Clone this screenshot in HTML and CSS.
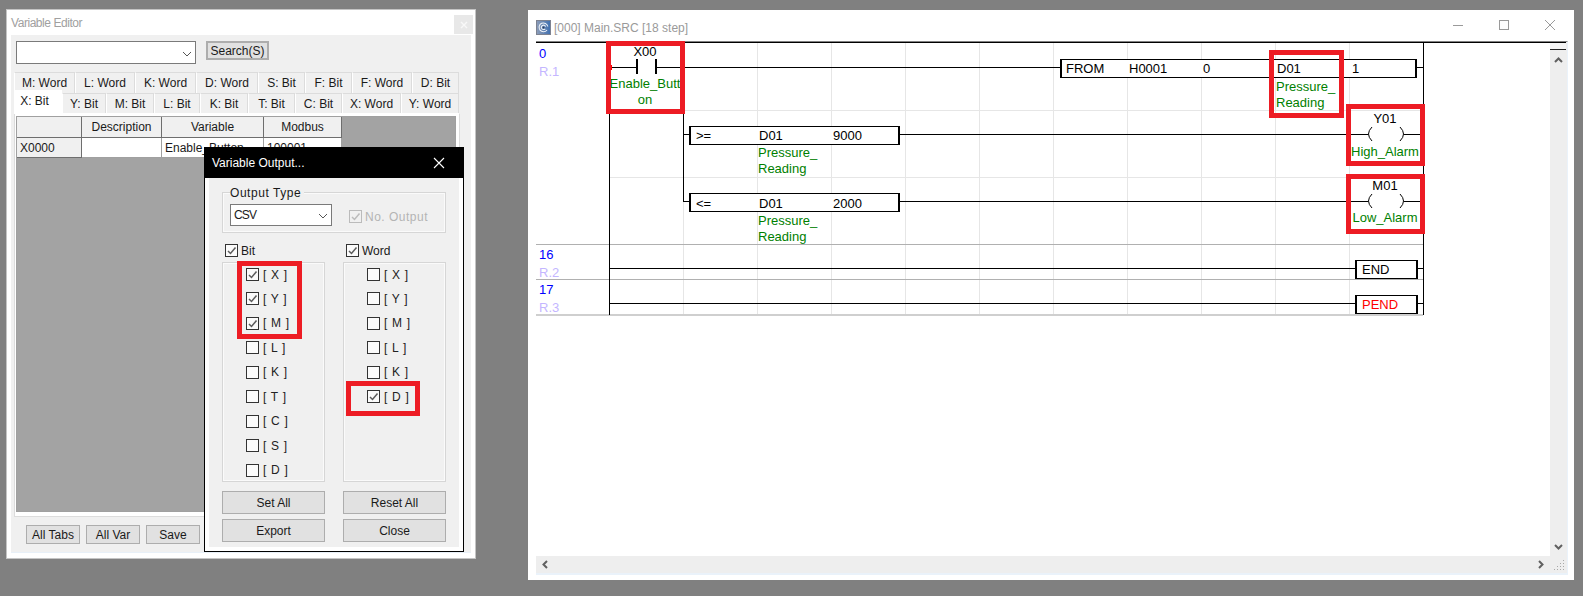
FILE: index.html
```html
<!DOCTYPE html>
<html lang="en">
<head>
<meta charset="utf-8">
<title>Variable Editor and Ladder</title>
<link rel="stylesheet" href="styles.css">
</head>
<body>
<section class="win editor">
  <header class="editor-title">
    <span>Variable Editor</span>
    <span class="editor-close"><svg width="8" height="8" viewBox="0 0 8 8"><path class="faint-x" d="M1 1L7 7M7 1L1 7"/></svg></span>
  </header>
  <div class="editor-body">
    <div class="toolbar">
      <div class="combo combo-wide"><svg class="chev" width="10" height="6" viewBox="0 0 10 6"><path d="M1 1L5 5L9 1"/></svg></div>
      <button class="btn btn-search">Search(S)</button>
    </div>
    <div class="tabs tabs-back">
      <span class="tab">M: Word</span><span class="tab">L: Word</span><span class="tab">K: Word</span><span class="tab">D: Word</span><span class="tab">S: Bit</span><span class="tab">F: Bit</span><span class="tab">F: Word</span><span class="tab">D: Bit</span>
    </div>
    <div class="tabs tabs-front">
      <span class="tab tab-on">X: Bit</span><span class="tab">Y: Bit</span><span class="tab">M: Bit</span><span class="tab">L: Bit</span><span class="tab">K: Bit</span><span class="tab">T: Bit</span><span class="tab">C: Bit</span><span class="tab">X: Word</span><span class="tab">Y: Word</span>
    </div>
    <div class="panel">
      <div class="grid">
        <div class="grid-row grid-head">
          <span class="cell head"></span><span class="cell head">Description</span><span class="cell head">Variable</span><span class="cell head">Modbus</span>
        </div>
        <div class="grid-row">
          <span class="cell rowhead">X0000</span><span class="cell data"></span><span class="cell data">Enable_Button</span><span class="cell data">100001</span>
        </div>
      </div>
    </div>
    <div class="editor-actions">
      <button class="btn btn-small">All Tabs</button>
      <button class="btn btn-small">All Var</button>
      <button class="btn btn-small">Save</button>
    </div>
  </div>
</section>

<section class="win dialog">
  <header class="dialog-title">
    <span>Variable Output...</span>
    <svg width="12" height="12" viewBox="0 0 12 12"><path class="white-x" d="M1 1L11 11M11 1L1 11"/></svg>
  </header>
  <div class="dialog-body">
    <div class="group">
      <div class="group-title">Output Type</div>
      <div class="group-row">
        <div class="combo combo-csv">CSV<svg class="chev" width="10" height="6" viewBox="0 0 10 6"><path d="M1 1L5 5L9 1"/></svg></div>
        <label class="check disabled"><span class="cb"><svg width="11" height="11" viewBox="0 0 11 11"><path d="M2 6L4.5 8.5L9.5 2.5"/></svg></span>No. Output</label>
      </div>
    </div>
    <div class="columns">
      <div class="column">
        <label class="check column-head"><span class="cb"><svg width="11" height="11" viewBox="0 0 11 11"><path d="M2 6L4.5 8.5L9.5 2.5"/></svg></span>Bit</label>
        <div class="list">
          <label class="check item"><span class="cb"><svg width="11" height="11" viewBox="0 0 11 11"><path d="M2 6L4.5 8.5L9.5 2.5"/></svg></span>[ X ]</label>
          <label class="check item"><span class="cb"><svg width="11" height="11" viewBox="0 0 11 11"><path d="M2 6L4.5 8.5L9.5 2.5"/></svg></span>[ Y ]</label>
          <label class="check item"><span class="cb"><svg width="11" height="11" viewBox="0 0 11 11"><path d="M2 6L4.5 8.5L9.5 2.5"/></svg></span>[ M ]</label>
          <label class="check item"><span class="cb"></span>[ L ]</label>
          <label class="check item"><span class="cb"></span>[ K ]</label>
          <label class="check item"><span class="cb"></span>[ T ]</label>
          <label class="check item"><span class="cb"></span>[ C ]</label>
          <label class="check item"><span class="cb"></span>[ S ]</label>
          <label class="check item"><span class="cb"></span>[ D ]</label>
        </div>
      </div>
      <div class="column">
        <label class="check column-head"><span class="cb"><svg width="11" height="11" viewBox="0 0 11 11"><path d="M2 6L4.5 8.5L9.5 2.5"/></svg></span>Word</label>
        <div class="list">
          <label class="check item"><span class="cb"></span>[ X ]</label>
          <label class="check item"><span class="cb"></span>[ Y ]</label>
          <label class="check item"><span class="cb"></span>[ M ]</label>
          <label class="check item"><span class="cb"></span>[ L ]</label>
          <label class="check item"><span class="cb"></span>[ K ]</label>
          <label class="check item"><span class="cb"><svg width="11" height="11" viewBox="0 0 11 11"><path d="M2 6L4.5 8.5L9.5 2.5"/></svg></span>[ D ]</label>
        </div>
      </div>
    </div>
    <div class="dialog-actions">
      <button class="btn">Set All</button>
      <button class="btn">Reset All</button>
      <button class="btn">Export</button>
      <button class="btn">Close</button>
    </div>
  </div>
  <div class="mark mark-bits"></div>
  <div class="mark mark-word"></div>
</section>

<section class="win ladder">
  <header class="ladder-title">
    <svg class="app-icon" width="15" height="15" viewBox="0 0 15 15">
      <defs><linearGradient id="iconFill" x1="0" y1="0" x2="1" y2="0"><stop offset="0" stop-color="#8d9db8"/><stop offset="1" stop-color="#3f6fb0"/></linearGradient></defs>
      <rect x="0.5" y="0.5" width="14" height="14" class="icon-bg" fill="url(#iconFill)"/>
      <path class="icon-ring" d="M11 10A4.4 4.4 0 1 1 11.8 6.5M9.2 8.8A2.2 2.2 0 1 1 9.6 6.6"/>
      <circle class="icon-core" cx="7.5" cy="7.5" r="1"/>
    </svg>
    <span class="ladder-name">[000] Main.SRC [18 step]</span>
    <div class="win-controls">
      <svg width="12" height="12" viewBox="0 0 12 12"><path class="ctl" d="M1 6.5H11"/></svg>
      <svg width="12" height="12" viewBox="0 0 12 12"><rect class="ctl" x="1.5" y="1.5" width="9" height="9"/></svg>
      <svg width="12" height="12" viewBox="0 0 12 12"><path class="ctl" d="M1 1L11 11M11 1L1 11"/></svg>
    </div>
  </header>
  <div class="ladder-body">
    <svg class="diagram" width="1014" height="515" viewBox="536 41 1014 515">
      <!-- grid -->
      <path class="g-light" d="M683.5 42V315M757.5 42V315M831.5 42V315M905.5 42V315M979.5 42V315M1053.5 42V315M1127.5 42V315M1201.5 42V315M1275.5 42V315M1349.5 42V315M609 110.5H1423M609 177.5H1423"/>
      <path class="g-row" d="M536 244.5H1423M536 279.5H1423"/>
      <path class="g-end" d="M536 315H1423"/>
      <path class="g-top" d="M536 41.5H1550"/>
      <path class="wire" d="M536 42.5H1550"/>
      <!-- rails and rungs -->
      <path class="wire" d="M609.5 42V315M1423.5 42V315M683.5 110V201.5M609 67.5H637M656 67.5H1060M1417 67.5H1423M683 134.5H689M900 134.5H1368M1404 134.5H1423M683 201.5H689M900 201.5H1368M1404 201.5H1423M609 268.5H1355M1418 268.5H1423M609 303.5H1355M1418 303.5H1423"/>
      <rect class="dot" x="609" y="65" width="3" height="5"/>
      <path class="bar" d="M637 59V74M656 59V74"/>
      <path class="paren" d="M1372 127Q1365 134 1372 141M1400 127Q1407 134 1400 141M1372 194Q1365 201 1372 208M1400 194Q1407 201 1400 208"/>
      <!-- boxes -->
      <rect class="box" x="689.5" y="126.5" width="210" height="18"/>
      <rect class="box" x="689.5" y="193.5" width="210" height="18"/>
      <rect class="box" x="1060.5" y="59.5" width="356" height="18"/>
      <rect class="box" x="1355.5" y="260.5" width="62" height="18"/>
      <rect class="box" x="1355.5" y="295.5" width="62" height="18"/>
      <path class="box-side" d="M690.5 126V145M898.5 126V145M690.5 193V212M898.5 193V212M1061.5 59V78M1415.5 59V78M1356.5 260V279M1416.5 260V279M1356.5 295V314M1416.5 295V314"/>
      <!-- row labels -->
      <text class="t-num" x="539" y="58">0</text><text class="t-row" x="539" y="76">R.1</text>
      <text class="t-num" x="539" y="259">16</text><text class="t-row" x="539" y="277">R.2</text>
      <text class="t-num" x="539" y="294">17</text><text class="t-row" x="539" y="312">R.3</text>
      <!-- contact -->
      <text class="t t-mid" x="645" y="56">X00</text>
      <text class="t-var t-mid" x="645" y="88">Enable_Butt</text>
      <text class="t-var t-mid" x="645" y="104">on</text>
      <!-- compare -->
      <text class="t" x="696" y="140">&gt;=</text><text class="t" x="759" y="140">D01</text><text class="t" x="833" y="140">9000</text>
      <text class="t-var" x="758" y="157">Pressure_</text><text class="t-var" x="758" y="173">Reading</text>
      <text class="t" x="696" y="208">&lt;=</text><text class="t" x="759" y="208">D01</text><text class="t" x="833" y="208">2000</text>
      <text class="t-var" x="758" y="225">Pressure_</text><text class="t-var" x="758" y="241">Reading</text>
      <!-- FROM -->
      <text class="t" x="1066" y="73">FROM</text><text class="t" x="1129" y="73">H0001</text><text class="t" x="1203" y="73">0</text><text class="t" x="1277" y="73">D01</text><text class="t" x="1352" y="73">1</text>
      <text class="t-var" x="1276" y="91">Pressure_</text><text class="t-var" x="1276" y="107">Reading</text>
      <!-- coils -->
      <text class="t t-mid" x="1385" y="123">Y01</text><text class="t-var t-mid" x="1385" y="156">High_Alarm</text>
      <text class="t t-mid" x="1385" y="190">M01</text><text class="t-var t-mid" x="1385" y="222">Low_Alarm</text>
      <!-- end -->
      <text class="t" x="1362" y="274">END</text>
      <text class="t t-red" x="1362" y="309">PEND</text>
      <!-- highlights -->
      <rect class="hl" x="608.5" y="43.5" width="74" height="68"/>
      <rect class="hl" x="1271.5" y="52.5" width="70" height="63"/>
      <rect class="hl" x="1348.5" y="106.5" width="74" height="57"/>
      <rect class="hl" x="1348.5" y="176.5" width="74" height="55"/>
    </svg>
    <div class="vscroll">
      <span class="thumb"></span>
      <svg class="arrow" width="9" height="6" viewBox="0 0 9 6"><path d="M1 5L4.5 1.5L8 5"/></svg>
      <svg class="arrow" width="9" height="6" viewBox="0 0 9 6"><path d="M1 1L4.5 4.5L8 1"/></svg>
    </div>
    <div class="hscroll">
      <svg class="arrow" width="6" height="9" viewBox="0 0 6 9"><path d="M5 1L1.5 4.5L5 8"/></svg>
      <svg class="arrow" width="6" height="9" viewBox="0 0 6 9"><path d="M1 1L4.5 4.5L1 8"/></svg>
    </div>
    <div class="corner"><svg width="12" height="12" viewBox="0 0 12 12"><path class="grip" d="M10 1h1v1h-1zM7 4h1v1h-1zM10 4h1v1h-1zM4 7h1v1h-1zM7 7h1v1h-1zM10 7h1v1h-1zM1 10h1v1h-1zM4 10h1v1h-1zM7 10h1v1h-1zM10 10h1v1h-1z"/></svg></div>
  </div>
</section>
</body>
</html>
```
FILE: styles.css
```css
* { box-sizing: border-box; }
html, body { margin: 0; padding: 0; }
body {
  position: relative;
  width: 1583px;
  height: 596px;
  overflow: hidden;
  background: #808080;
  font: 12px "Liberation Sans", Arial, sans-serif;
  color: #1a1a1a;
}
.win { position: absolute; }

/* shared controls */
.btn {
  display: block;
  margin: 0;
  padding: 0;
  background: #e1e1e1;
  border: 1px solid #adadad;
  font: 12px "Liberation Sans", Arial, sans-serif;
  color: #1a1a1a;
}
.combo {
  position: relative;
  background: #fff;
  border: 1px solid #7a7a7a;
  display: flex;
  align-items: center;
  padding-left: 3px;
}
.chev {
  position: absolute;
  right: 3px;
  top: 50%;
  margin-top: -2px;
}
.chev path { fill: none; stroke: #555; stroke-width: 1; }

/* Variable Editor */
.editor {
  left: 6px;
  top: 9px;
  width: 470px;
  height: 550px;
  background: #fff;
  border: 1px solid #c4c4c4;
  display: flex;
  flex-direction: column;
  padding: 0 4px 5px;
}
.editor-title {
  height: 25px;
  flex: none;
  display: flex;
  align-items: center;
  justify-content: space-between;
  color: #a0a0a0;
  letter-spacing: -0.45px;
}
.editor-close {
  width: 19px;
  height: 19px;
  margin-right: -2px;
  margin-top: 4px;
  background: #e8e8e8;
  display: flex;
  align-items: center;
  justify-content: center;
}
.faint-x { stroke: #f8f8f8; stroke-width: 1.4; fill: none; }
.editor-body {
  flex: 1;
  background: #f0f0f0;
  border-bottom: 1px solid #e8f0f8;
  padding: 6px 5px 0;
  display: flex;
  flex-direction: column;
}
.toolbar { display: flex; gap: 10px; align-items: flex-start; }
.combo-wide { width: 180px; height: 23px; }
.btn-search { width: 63px; height: 19px; border-width: 2px; font-size: 12px; }
.tabs { display: grid; margin-left: -2px; width: 445px; }
.tabs-back {
  margin-top: 8px;
  height: 21px;
  grid-template-columns: 61px 60px 61px 62px 47px 47px 60px 47px;
}
.tabs-front {
  height: 20px;
  grid-template-columns: 48px 44px 48px 46px 48px 47px 47px 59px 58px;
}
.tab {
  display: flex;
  align-items: center;
  justify-content: center;
  background: #f0f0f0;
  border: 1px solid #dcdcdc;
  border-left-color: #fff;
  border-bottom: 0;
}
.tab-on {
  position: relative;
  z-index: 1;
  background: #fff;
  margin-top: -3px;
  height: 24px;
  padding: 0 7px 3px 0;
  border-color: #fff;
}
.panel {
  margin-left: -2px;
  width: 446px;
  height: 404px;
  background: #fff;
  border: 1px solid #dcdcdc;
  border-top-color: #fff;
  padding: 2px 3px 4px 1px;
  flex: none;
}
.grid {
  height: 100%;
  background: #a3a3a3;
  border: 1px solid #a0a0a0;
}
.grid-row { display: flex; height: 20px; }
.grid-head { height: 21px; }
.cell {
  display: flex;
  align-items: center;
  padding: 0 3px;
  border-right: 1px solid #a0a0a0;
  border-bottom: 1px solid #a0a0a0;
}
.cell:nth-child(1) { width: 65px; }
.cell:nth-child(2) { width: 80px; }
.cell:nth-child(3) { width: 102px; }
.cell:nth-child(4) { width: 78px; }
.head {
  background: #f0f0f0;
  justify-content: center;
  border-color: #6e6e6e;
}
.rowhead { background: #f0f0f0; border-color: #6e6e6e; }
.data { background: #fff; }
.editor-actions { display: flex; gap: 6px; padding: 8px 0 0 10px; }
.btn-small { width: 54px; height: 19px; }

/* Variable Output dialog */
.dialog {
  left: 204px;
  top: 147px;
  width: 260px;
  height: 405px;
  background: #fff;
  border: 1px solid #000;
  display: flex;
  flex-direction: column;
}
.dialog-title {
  height: 30px;
  flex: none;
  background: #000;
  color: #fff;
  display: flex;
  align-items: center;
  justify-content: space-between;
  padding: 0 18px 0 7px;
}
.white-x { stroke: #fff; stroke-width: 1.1; fill: none; }
.dialog-body {
  margin: 0 4px 4px;
  flex: 1;
  background: #f0f0f0;
  padding: 14px 13px 0;
}
.group {
  height: 41px;
  border: 1px solid #d6d6d6;
  box-shadow: inset 0 0 0 1px #fafafa;
  padding: 0 7px;
}
.group-title {
  width: fit-content;
  margin-top: -7px;
  padding: 0 3px 0 0;
  height: 14px;
  line-height: 14px;
  background: #f0f0f0;
  letter-spacing: 0.55px;
}
.group-row {
  display: flex;
  align-items: center;
  gap: 17px;
  margin-top: 4px;
}
.combo-csv { width: 102px; height: 22px; letter-spacing: -0.8px; }
.check { display: flex; align-items: center; gap: 3px; height: 13px; white-space: nowrap; }
.cb {
  flex: none;
  width: 13px;
  height: 13px;
  background: #fbfbfb;
  border: 1px solid #333;
  display: block;
}
.cb svg { display: block; }
.cb path { fill: none; stroke: #5c5c5c; stroke-width: 1.5; }
.disabled { color: #b4b4b4; letter-spacing: 0.5px; margin-top: 3px; }
.disabled .cb { border-color: #bbb; background: #f0f0f0; }
.disabled .cb path { stroke: #bbb; }
.columns {
  display: grid;
  grid-template-columns: 103px 103px;
  gap: 18px;
  margin-top: 11px;
}
.column-head { margin-left: 3px; }
.list {
  margin-top: 5px;
  height: 220px;
  border: 1px solid #d6d6d6;
  box-shadow: inset 0 0 0 1px #fafafa;
  padding: 5px 0 0 23px;
  display: flex;
  flex-direction: column;
  gap: 11.45px;
}
.item { letter-spacing: 0.7px; color: #222; gap: 4px; }
.dialog-actions {
  display: grid;
  grid-template-columns: 103px 103px;
  column-gap: 18px;
  row-gap: 5px;
  grid-auto-rows: 23px;
  margin-top: 9px;
}
.mark {
  position: absolute;
  border: 5px solid #ed1c24;
}
.mark-bits { left: 32px; top: 113px; width: 65px; height: 78px; }
.mark-word { left: 141px; top: 233px; width: 74px; height: 35px; }

/* Ladder window */
.ladder {
  left: 528px;
  top: 10px;
  width: 1046px;
  height: 570px;
  background: #fff;
  display: flex;
  flex-direction: column;
  padding: 0 6px 5px 8px;
}
.ladder-title {
  height: 31px;
  flex: none;
  display: flex;
  align-items: center;
  color: #9a9a9a;
  padding-top: 4px;
}
.app-icon { margin-right: 3px; flex: none; }
.icon-bg { stroke: #7d8290; }
.icon-ring { fill: none; stroke: #eef2f8; stroke-width: 1.1; }
.icon-core { fill: #2a3c5c; }
.win-controls {
  margin-left: auto;
  display: flex;
  gap: 34px;
  margin-right: 12px;
  margin-top: -6px;
}
.ctl { fill: none; stroke: #9a9a9a; stroke-width: 1; }
.ladder-body {
  flex: 1;
  display: grid;
  grid-template-columns: 1014px 18px;
  grid-template-rows: 515px 17px;
  border-bottom: 2px solid #eaf2fa;
}
.diagram { display: block; }
.g-light { stroke: #e6e6e6; stroke-width: 1; fill: none; shape-rendering: crispEdges; }
.g-row { stroke: #b0b0b0; stroke-width: 1; fill: none; shape-rendering: crispEdges; }
.g-end { stroke: #cfcfcf; stroke-width: 2; fill: none; shape-rendering: crispEdges; }
.g-top { stroke: #808080; stroke-width: 1; fill: none; shape-rendering: crispEdges; }
.wire { stroke: #000; stroke-width: 1; fill: none; shape-rendering: crispEdges; }
.bar { stroke: #000; stroke-width: 2; fill: none; shape-rendering: crispEdges; }
.dot { fill: #ff0000; }
.paren { stroke: #000; stroke-width: 1; fill: none; }
.box { fill: #fff; stroke: #000; stroke-width: 1; shape-rendering: crispEdges; }
.box-side { stroke: #000; stroke-width: 1; fill: none; shape-rendering: crispEdges; }
.hl { fill: none; stroke: #ed1c24; stroke-width: 5; shape-rendering: crispEdges; }
.diagram text { font: 13px "Liberation Sans", Arial, sans-serif; }
.t { fill: #000; }
.t-var { fill: #008000; }
.t-num { fill: #0000ff; }
.t-row { fill: #c4b6ff; }
.t-red { fill: #ff0000; }
.t-mid { text-anchor: middle; }
.vscroll {
  background: #eeeeee;
  border-right: 1px solid #eaf2fa;
  height: 515px;
  display: flex;
  flex-direction: column;
  align-items: center;
  padding: 0;
  border-top: 1px solid #808080;
}
.thumb {
  align-self: flex-start;
  width: 16px;
  height: 8px;
  background: #f4f4f4;
  border-top: 1px solid #000;
  border-bottom: 1px solid #222;
  margin-bottom: 7px;
}
.vscroll .arrow:last-child { margin-top: auto; margin-bottom: 6px; }
.arrow path { fill: none; stroke: #606060; stroke-width: 2; }
.hscroll {
  background: #eeeeee;
  display: flex;
  align-items: center;
  justify-content: space-between;
  padding: 0 6px;
}
.corner {
  background: #eeeeee;
  border-right: 1px solid #eaf2fa;
  display: flex;
  align-items: center;
  justify-content: center;
}
.grip { fill: #a8a8a8; }
```
